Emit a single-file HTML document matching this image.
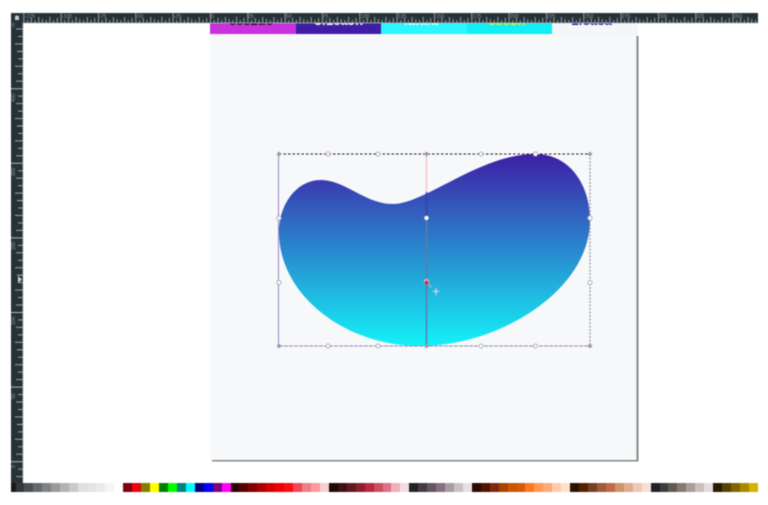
<!DOCTYPE html>
<html>
<head>
<meta charset="utf-8">
<style>
html,body{margin:0;padding:0;background:#fff;width:768px;height:505px;overflow:hidden}
svg{display:block;position:absolute;left:0;top:0;filter:blur(.5px)}
text{font-family:"Liberation Sans",sans-serif}
</style>
</head>
<body>
<svg width="768" height="505" viewBox="0 0 768 505" xmlns="http://www.w3.org/2000/svg">
<defs>
<linearGradient id="g" gradientUnits="userSpaceOnUse" x1="0" y1="154" x2="0" y2="346">
<stop offset="0" stop-color="#3f1ea5"/>
<stop offset="1" stop-color="#14f2f8"/>
</linearGradient>
<pattern id="tt" patternUnits="userSpaceOnUse" x="210" y="13" width="37.33" height="10">
<g stroke="#aeb6b8" stroke-width=".8">
<path d="M.5 0V10M4.2 7V10M7.9 5V10M11.7 7V10M15.4 4V10M19.1 6V10M22.9 7V10M26.6 4V10M30.3 7V10M34 5V10"/>
</g>
</pattern>
<pattern id="lt" patternUnits="userSpaceOnUse" x="11" y="13.6" width="12" height="74.6">
<g stroke="#aeb6b8" stroke-width=".9">
<path d="M0 .5H12M7 7.9H12M5 15.4H12M7 22.9H12M4 30.3H12M6 37.8H12M7 45.2H12M4 52.7H12M7 60.1H12M5 67.6H12"/>
</g>
</pattern>
<clipPath id="bar"><rect x="210" y="23" width="428" height="11"/></clipPath>
</defs>

<!-- page -->
<rect x="212" y="36" width="426.500" height="425.500" fill="#85888a"/>
<rect x="210" y="34" width="426.500" height="426" fill="#f7f8fa"/>
<rect x="210" y="33.500" width="428" height="1" fill="#eceef3"/>

<!-- colour bar -->
<rect x="210" y="23" width="86" height="11" fill="#c832dc"/>
<rect x="296" y="23" width="85" height="11" fill="#3f1ea5"/>
<rect x="381" y="23" width="86" height="11" fill="#2cf6ff"/>
<rect x="467" y="23" width="85" height="11" fill="#12eef6"/>
<rect x="552" y="23" width="86" height="11" fill="#f5f6fa"/>
<g clip-path="url(#bar)" font-size="13" font-weight="bold" text-anchor="middle">
<text x="251" y="25" fill="#2a1030">c832dc</text>
<text x="339" y="25" fill="#fff">3f1ea5ff</text>
<text x="421" y="25" fill="#fff">fafafa</text>
<text x="507" y="25" fill="#f6f600">c8c8ff</text>
<text x="592" y="25" fill="#3f1ea5" font-style="italic">1f3a8a</text>
</g>

<!-- shape -->
<path d="M279 232C279 205 296 180 321 180C345 180 365 204 393 204C425 204 480 154 535 154C570 154 590 185 590 220C590 290 500 346 420 346C345 346 279 295 279 232Z" fill="url(#g)"/>

<!-- selection frame -->
<path d="M279 154H590" stroke="#1e1e1e" stroke-width=".9" stroke-dasharray="2.500 2" fill="none"/>
<path d="M590 154V346" stroke="#9a9aa6" stroke-width="1.300" stroke-dasharray="2 1.500" fill="none"/>
<path d="M278.500 154V346" stroke="#8f88cc" stroke-width="1" fill="none"/>
<path d="M279 346H590" stroke="#9088b8" stroke-width="1" stroke-dasharray="4 1" fill="none"/>
<path d="M426.500 154V192" stroke="#f0c4c6" stroke-width="1.400" fill="none"/>
<path d="M426.500 192V218" stroke="#3a40a8" stroke-width="1.400" fill="none"/>
<path d="M426.500 218V346" stroke="#5a7cb0" stroke-width="1.500" fill="none"/>

<!-- handles -->
<g fill="#fafafa" stroke="#a4a4a8" stroke-width=".8">
<circle cx="328" cy="154" r="2"/><circle cx="378" cy="154" r="2"/>
<circle cx="481" cy="154" r="2"/><circle cx="535.500" cy="154" r="2.200"/>
<circle cx="328" cy="346" r="2"/><circle cx="378" cy="346" r="2"/>
<circle cx="481" cy="346" r="2"/><circle cx="535.500" cy="346" r="2"/>
<circle cx="279" cy="218" r="2.200"/><circle cx="279" cy="282.500" r="2.200"/>
<circle cx="590" cy="218" r="2.200"/><circle cx="590" cy="282.500" r="2.200"/>
</g>
<g fill="#9a9a9e">
<path d="M279 151.500L281.500 154L279 156.500L276.500 154Z"/>
<path d="M590 151.500L592.500 154L590 156.500L587.500 154Z"/>
<path d="M279 343.500L281.500 346L279 348.500L276.500 346Z"/>
<path d="M590 343.500L592.500 346L590 348.500L587.500 346Z"/>
<path d="M426.500 151.500L429 154L426.500 156.500L424 154Z"/>
<path d="M426.500 343.500L429 346L426.500 348.500L424 346Z"/>
</g>
<circle cx="426.500" cy="218" r="2.200" fill="#fff" stroke="#9aa" stroke-width=".4"/>

<!-- centre and cursor -->
<circle cx="426.500" cy="281.500" r="2.700" fill="#b8c4cc" stroke="#8a9aa8" stroke-width=".6"/>
<circle cx="426.500" cy="282.500" r="1.700" fill="#d8202c"/>
<path d="M429 284L431 287.500" stroke="#a8b8c0" stroke-width="1.500" fill="none"/>
<path d="M436 288V295M432.800 291.300H439.200" stroke="#c4d4dc" stroke-width="1.400" fill="none"/>

<!-- rulers -->
<rect x="11" y="13" width="747" height="10" fill="#263238"/>
<rect x="11" y="13" width="12" height="479" fill="#263238"/>
<rect x="23" y="13" width="735" height="10" fill="url(#tt)"/>
<rect x="11" y="23" width="12" height="460" fill="url(#lt)"/>
<rect x="23" y="22.600" width="735" height=".8" fill="#b4bcc0"/>
<rect x="22.600" y="23" width=".8" height="460" fill="#b4bcc0"/>
<path d="M15 20V17.500A2 2 0 0 1 19 17.500V20Z" fill="#c8ced0"/>
<g font-size="5" fill="#8e989c">
<text x="25" y="18">-125</text><text x="62" y="18">-100</text><text x="99" y="18">-75</text>
<text x="136" y="18">-50</text><text x="174" y="18">-25</text><text x="211" y="18">0</text>
<text x="248" y="18">25</text><text x="286" y="18">50</text><text x="323" y="18">75</text>
<text x="361" y="18">100</text><text x="398" y="18">125</text><text x="436" y="18">150</text>
<text x="473" y="18">175</text><text x="510" y="18">200</text><text x="547" y="18">225</text>
<text x="585" y="18">250</text><text x="622" y="18">275</text><text x="659" y="18">300</text>
<text x="696" y="18">325</text><text x="734" y="18">350</text>
</g>
<g font-size="5" fill="#8e989c">
<text x="12" y="27">0</text>
<text transform="translate(15 102) rotate(-90)">400</text>
<text transform="translate(15 176) rotate(-90)">300</text>
<text transform="translate(15 250) rotate(-90)">200</text>
<text transform="translate(15 325) rotate(-90)">100</text>
<text transform="translate(15 399) rotate(-90)">50</text>
<text transform="translate(15 468) rotate(-90)">0</text>
</g>
<path d="M18 276L22 279.500L18 283Z" fill="#c8ced0"/>

<!-- palette -->
<g shape-rendering="crispEdges">
<rect x="11" y="483" width="5" height="9" fill="#181818"/>
<rect x="16" y="483" width="8" height="9" fill="#33383a"/>
<rect x="24" y="483" width="9" height="9" fill="#4c4f52"/>
<rect x="33" y="483" width="9" height="9" fill="#66696c"/>
<rect x="42" y="483" width="9" height="9" fill="#7f8285"/>
<rect x="51" y="483" width="9" height="9" fill="#999b9d"/>
<rect x="60" y="483" width="9" height="9" fill="#b2b3b5"/>
<rect x="69" y="483" width="9" height="9" fill="#c8c9ca"/>
<rect x="78" y="483" width="9" height="9" fill="#e0e0e2"/>
<rect x="87" y="483" width="9" height="9" fill="#e4e4e8"/>
<rect x="96" y="483" width="9" height="9" fill="#ebebef"/>
<rect x="105" y="483" width="9" height="9" fill="#f5f5f8"/>
<rect x="114" y="483" width="9" height="9" fill="#fff"/>
<rect x="123" y="483" width="9" height="9" fill="#800010"/>
<rect x="132" y="483" width="9" height="9" fill="#f00010"/>
<rect x="141" y="483" width="9" height="9" fill="#808000"/>
<rect x="150" y="483" width="9" height="9" fill="#ffff00"/>
<rect x="159" y="483" width="9" height="9" fill="#008000"/>
<rect x="168" y="483" width="9" height="9" fill="#00ff00"/>
<rect x="177" y="483" width="9" height="9" fill="#008080"/>
<rect x="186" y="483" width="9" height="9" fill="#00ffff"/>
<rect x="195" y="483" width="9" height="9" fill="#000080"/>
<rect x="204" y="483" width="9" height="9" fill="#0000ff"/>
<rect x="213" y="483" width="9" height="9" fill="#800080"/>
<rect x="222" y="483" width="9" height="9" fill="#ff00ff"/>
<rect x="231" y="483" width="8" height="9" fill="#2b0000"/>
<rect x="239" y="483" width="9" height="9" fill="#550000"/>
<rect x="248" y="483" width="9" height="9" fill="#800000"/>
<rect x="257" y="483" width="9" height="9" fill="#aa0000"/>
<rect x="266" y="483" width="9" height="9" fill="#d40000"/>
<rect x="275" y="483" width="9" height="9" fill="#f00008"/>
<rect x="284" y="483" width="9" height="9" fill="#f81010"/>
<rect x="293" y="483" width="9" height="9" fill="#f04858"/>
<rect x="302" y="483" width="9" height="9" fill="#ee7f85"/>
<rect x="311" y="483" width="9" height="9" fill="#fb9aa0"/>
<rect x="320" y="483" width="9" height="9" fill="#f5d0d0"/>
<rect x="329" y="483" width="9" height="9" fill="#1c0a0a"/>
<rect x="338" y="483" width="9" height="9" fill="#400f10"/>
<rect x="347" y="483" width="9" height="9" fill="#5e1a22"/>
<rect x="356" y="483" width="9" height="9" fill="#8a1f30"/>
<rect x="365" y="483" width="9" height="9" fill="#b52a40"/>
<rect x="374" y="483" width="9" height="9" fill="#c85060"/>
<rect x="383" y="483" width="8" height="9" fill="#e0708a"/>
<rect x="391" y="483" width="9" height="9" fill="#eeb0bc"/>
<rect x="400" y="483" width="9" height="9" fill="#f2dde2"/>
<rect x="409" y="483" width="9" height="9" fill="#222226"/>
<rect x="418" y="483" width="9" height="9" fill="#443a40"/>
<rect x="427" y="483" width="9" height="9" fill="#655560"/>
<rect x="436" y="483" width="9" height="9" fill="#86707e"/>
<rect x="445" y="483" width="9" height="9" fill="#a89ca4"/>
<rect x="454" y="483" width="9" height="9" fill="#c9c0c5"/>
<rect x="463" y="483" width="9" height="9" fill="#e5e0e4"/>
<rect x="472" y="483" width="9" height="9" fill="#2a0a00"/>
<rect x="481" y="483" width="9" height="9" fill="#501400"/>
<rect x="490" y="483" width="9" height="9" fill="#7a2a10"/>
<rect x="499" y="483" width="9" height="9" fill="#a84400"/>
<rect x="508" y="483" width="9" height="9" fill="#cc5500"/>
<rect x="517" y="483" width="8" height="9" fill="#d45a10"/>
<rect x="525" y="483" width="9" height="9" fill="#ff7722"/>
<rect x="534" y="483" width="9" height="9" fill="#ff9955"/>
<rect x="543" y="483" width="9" height="9" fill="#ffaa77"/>
<rect x="552" y="483" width="9" height="9" fill="#ffccaa"/>
<rect x="561" y="483" width="9" height="9" fill="#ffe0cc"/>
<rect x="570" y="483" width="9" height="9" fill="#2b1100"/>
<rect x="579" y="483" width="9" height="9" fill="#552200"/>
<rect x="588" y="483" width="9" height="9" fill="#783e24"/>
<rect x="597" y="483" width="9" height="9" fill="#a05a3a"/>
<rect x="606" y="483" width="9" height="9" fill="#c06a45"/>
<rect x="615" y="483" width="9" height="9" fill="#d0946c"/>
<rect x="624" y="483" width="9" height="9" fill="#dfae90"/>
<rect x="633" y="483" width="9" height="9" fill="#eccab5"/>
<rect x="642" y="483" width="9" height="9" fill="#f6e0d6"/>
<rect x="651" y="483" width="9" height="9" fill="#222226"/>
<rect x="660" y="483" width="8" height="9" fill="#3c3c3c"/>
<rect x="668" y="483" width="9" height="9" fill="#5f5a50"/>
<rect x="677" y="483" width="9" height="9" fill="#857a6e"/>
<rect x="686" y="483" width="9" height="9" fill="#a89e96"/>
<rect x="695" y="483" width="9" height="9" fill="#c8c0bc"/>
<rect x="704" y="483" width="9" height="9" fill="#e3dde0"/>
<rect x="713" y="483" width="9" height="9" fill="#2b1b00"/>
<rect x="722" y="483" width="9" height="9" fill="#554400"/>
<rect x="731" y="483" width="9" height="9" fill="#806600"/>
<rect x="740" y="483" width="9" height="9" fill="#aa8800"/>
<rect x="749" y="483" width="9" height="9" fill="#d4b400"/>
</g>
</svg>
</body>
</html>
